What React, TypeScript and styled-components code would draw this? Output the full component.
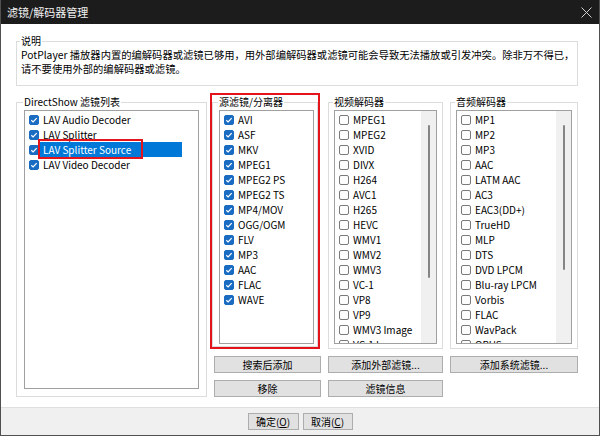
import React from "react";
import styled, { createGlobalStyle } from "styled-components";

const GlobalStyle = createGlobalStyle`
  html, body {
    margin: 0;
    padding: 0;
    background: #ffffff;
  }
  body {
    font-family: "Noto Sans CJK SC", "Noto Sans", sans-serif;
    font-size: 10px;
    color: #000;
  }
  * {
    box-sizing: border-box;
  }
`;

const Window = styled.div`
  width: 600px;
  height: 436px;
  display: flex;
  flex-direction: column;
  background: #fff;
  border: 1px solid #505050;
  border-top: none;
  overflow: hidden;
`;

const TitleBar = styled.div`
  height: 24px;
  flex: 0 0 24px;
  background: #1c1c1c;
  color: #f2f2f2;
  font-size: 11px;
  display: flex;
  align-items: center;
  justify-content: space-between;
  padding: 0 7px 0 6px;
`;

const Body = styled.div`
  flex: 1;
  display: flex;
  flex-direction: column;
  padding: 10px 21px 0 15px;
`;

const Group = styled.fieldset`
  margin: 0;
  min-width: 0;
  border: 1px solid #dcdcdc;
  padding: 1px 5px 4px 5px;
  display: flex;
  flex-direction: column;
`;

const Legend = styled.legend`
  padding: 0 1px;
  margin-left: -1px;
  line-height: 14px;
  font-size: 10px;
  background: #fff;
`;

const NoteGroup = styled(Group)`
  width: 562px;
  height: 52px;
  padding: 0 4px;
`;

const NoteText = styled.div`
  font-size: 10.3px;
  line-height: 14px;
  white-space: nowrap;
`;

const MainRow = styled.div`
  display: flex;
  gap: 3px;
  margin-top: 7px;
  height: 304px;
`;

const FilterGroup = styled(Group)`
  width: 191px;
  height: 302px;
  margin-top: 2px;
  padding: 1px 7px 7px 7px;
`;

const RightGrid = styled.div`
  display: grid;
  grid-template-columns: 111px 115px 128px;
  grid-template-rows: 256px 17px 17px;
  column-gap: 7px;
  row-gap: 7px;
`;

const RedFrame = styled.div`
  width: 110px;
  height: 256px;
  border: 2px solid #e3141b;
  display: flex;
`;

const SourceGroup = styled(Group)`
  flex: 1;
  padding: 1px 3px 2px 6px;
`;

const CodecGroup = styled(Group)`
  height: 254px;
  margin-top: 2px;
`;

const ListBox = styled.div`
  flex: 1;
  min-height: 0;
  border: 1px solid #a0a0a0;
  background: #fff;
  display: flex;
  overflow: hidden;
`;

const Items = styled.div`
  flex: 1;
  min-width: 0;
  padding-top: 1px;
  overflow: hidden;
`;

const Row = styled.div`
  height: 15px;
  display: flex;
  align-items: center;
  padding-left: 4px;
  white-space: nowrap;
`;

const Box = styled.span<{ $checked: boolean }>`
  flex: 0 0 10px;
  width: 10px;
  height: 10px;
  border-radius: 2px;
  display: inline-flex;
  align-items: center;
  justify-content: center;
  background: ${(p) => (p.$checked ? "#1a6cc2" : "#fdfdfd")};
  border: 1px solid ${(p) => (p.$checked ? "#1a6cc2" : "#7a7a7a")};
`;

const Label = styled.span<{ $selected?: boolean }>`
  position: relative;
  flex: 1;
  margin-left: 1px;
  margin-right: 16px;
  padding: 0 3px;
  height: 15px;
  line-height: 15px;
  background: ${(p) => (p.$selected ? "#0078d7" : "transparent")};
  color: ${(p) => (p.$selected ? "#fff" : "#000")};
`;

const Marker = styled.span`
  position: absolute;
  left: -2px;
  top: -3px;
  width: 105px;
  height: 20px;
  border: 2px solid #e3141b;
  pointer-events: none;
`;

const Track = styled.div`
  flex: 0 0 15px;
  background: #f0f0f0;
  display: flex;
  justify-content: center;
  padding-top: 14px;
`;

const Thumb = styled.div<{ $h: number }>`
  width: 2px;
  height: ${(p) => p.$h}px;
  border-radius: 1px;
  background: #858585;
`;

const Button = styled.button<{ $inset?: boolean }>`
  height: 17px;
  margin: 0;
  padding: 0;
  border: 1px solid #adadad;
  background: #e1e1e1;
  color: #000;
  font-family: inherit;
  font-size: 10px;
  line-height: 15px;
  justify-self: ${(p) => (p.$inset ? "end" : "stretch")};
  width: ${(p) => (p.$inset ? "107px" : "auto")};
`;

const Footer = styled.div`
  height: 28px;
  flex: 0 0 28px;
  border-top: 1px solid #dfdfdf;
  background: #f0f0f0;
  display: flex;
  justify-content: center;
  align-items: flex-start;
  gap: 4px;
  padding-top: 5px;
`;

const FooterButton = styled(Button)<{ $w: number }>`
  width: ${(p) => p.$w}px;
`;

const Check = () => (
  <svg width="8" height="8" viewBox="0 0 8 8">
    <path d="M1.3 4.2 L3.1 5.9 L6.7 2.1" fill="none" stroke="#fff" strokeWidth="1.2" />
  </svg>
);

const CloseIcon = () => (
  <svg width="11" height="11" viewBox="0 0 11 11">
    <path d="M0.5 0.5 L10.5 10.5 M10.5 0.5 L0.5 10.5" stroke="#d0d0d0" strokeWidth="1" />
  </svg>
);

interface Item {
  name: string;
  checked: boolean;
  selected?: boolean;
  marked?: boolean;
}

const ListRows: React.FC<{ items: Item[] }> = ({ items }) => (
  <Items>
    {items.map((it) => (
      <Row key={it.name}>
        <Box $checked={it.checked}>{it.checked && <Check />}</Box>
        <Label $selected={it.selected}>
          {it.name}
          {it.marked && <Marker />}
        </Label>
      </Row>
    ))}
  </Items>
);

const filters: Item[] = [
  { name: "LAV Audio Decoder", checked: true },
  { name: "LAV Splitter", checked: true },
  { name: "LAV Splitter Source", checked: true, selected: true, marked: true },
  { name: "LAV Video Decoder", checked: true },
];

const sources: Item[] = [
  "AVI", "ASF", "MKV", "MPEG1", "MPEG2 PS", "MPEG2 TS", "MP4/MOV",
  "OGG/OGM", "FLV", "MP3", "AAC", "FLAC", "WAVE",
].map((name) => ({ name, checked: true }));

const video: Item[] = [
  "MPEG1", "MPEG2", "XVID", "DIVX", "H264", "AVC1", "H265", "HEVC",
  "WMV1", "WMV2", "WMV3", "VC-1", "VP8", "VP9", "WMV3 Image", "VC-1 Image",
].map((name) => ({ name, checked: false }));

const audio: Item[] = [
  "MP1", "MP2", "MP3", "AAC", "LATM AAC", "AC3", "EAC3(DD+)", "TrueHD",
  "MLP", "DTS", "DVD LPCM", "Blu-ray LPCM", "Vorbis", "FLAC", "WavPack", "OPUS",
].map((name) => ({ name, checked: false }));

export default function App() {
  return (
    <>
      <GlobalStyle />
      <Window>
        <TitleBar>
          <span>滤镜/解码器管理</span>
          <CloseIcon />
        </TitleBar>
        <Body>
          <NoteGroup>
            <Legend>说明</Legend>
            <NoteText>
              PotPlayer 播放器内置的编解码器或滤镜已够用，用外部编解码器或滤镜可能会导致无法播放或引发冲突。除非万不得已，
            </NoteText>
            <NoteText>请不要使用外部的编解码器或滤镜。</NoteText>
          </NoteGroup>

          <MainRow>
            <FilterGroup>
              <Legend>DirectShow 滤镜列表</Legend>
              <ListBox>
                <ListRows items={filters} />
              </ListBox>
            </FilterGroup>

            <RightGrid>
              <RedFrame>
                <SourceGroup>
                  <Legend>源滤镜/分离器</Legend>
                  <ListBox>
                    <ListRows items={sources} />
                  </ListBox>
                </SourceGroup>
              </RedFrame>
              <CodecGroup>
                <Legend>视频解码器</Legend>
                <ListBox>
                  <ListRows items={video} />
                  <Track>
                    <Thumb $h={153} />
                  </Track>
                </ListBox>
              </CodecGroup>
              <CodecGroup>
                <Legend>音频解码器</Legend>
                <ListBox>
                  <ListRows items={audio} />
                  <Track>
                    <Thumb $h={145} />
                  </Track>
                </ListBox>
              </CodecGroup>

              <Button $inset>搜索后添加</Button>
              <Button>添加外部滤镜...</Button>
              <Button>添加系统滤镜...</Button>

              <Button $inset>移除</Button>
              <Button>滤镜信息</Button>
            </RightGrid>
          </MainRow>
        </Body>
        <Footer>
          <FooterButton $w={51}>
            确定(<u>O</u>)
          </FooterButton>
          <FooterButton $w={50}>
            取消(<u>C</u>)
          </FooterButton>
        </Footer>
      </Window>
    </>
  );
}
